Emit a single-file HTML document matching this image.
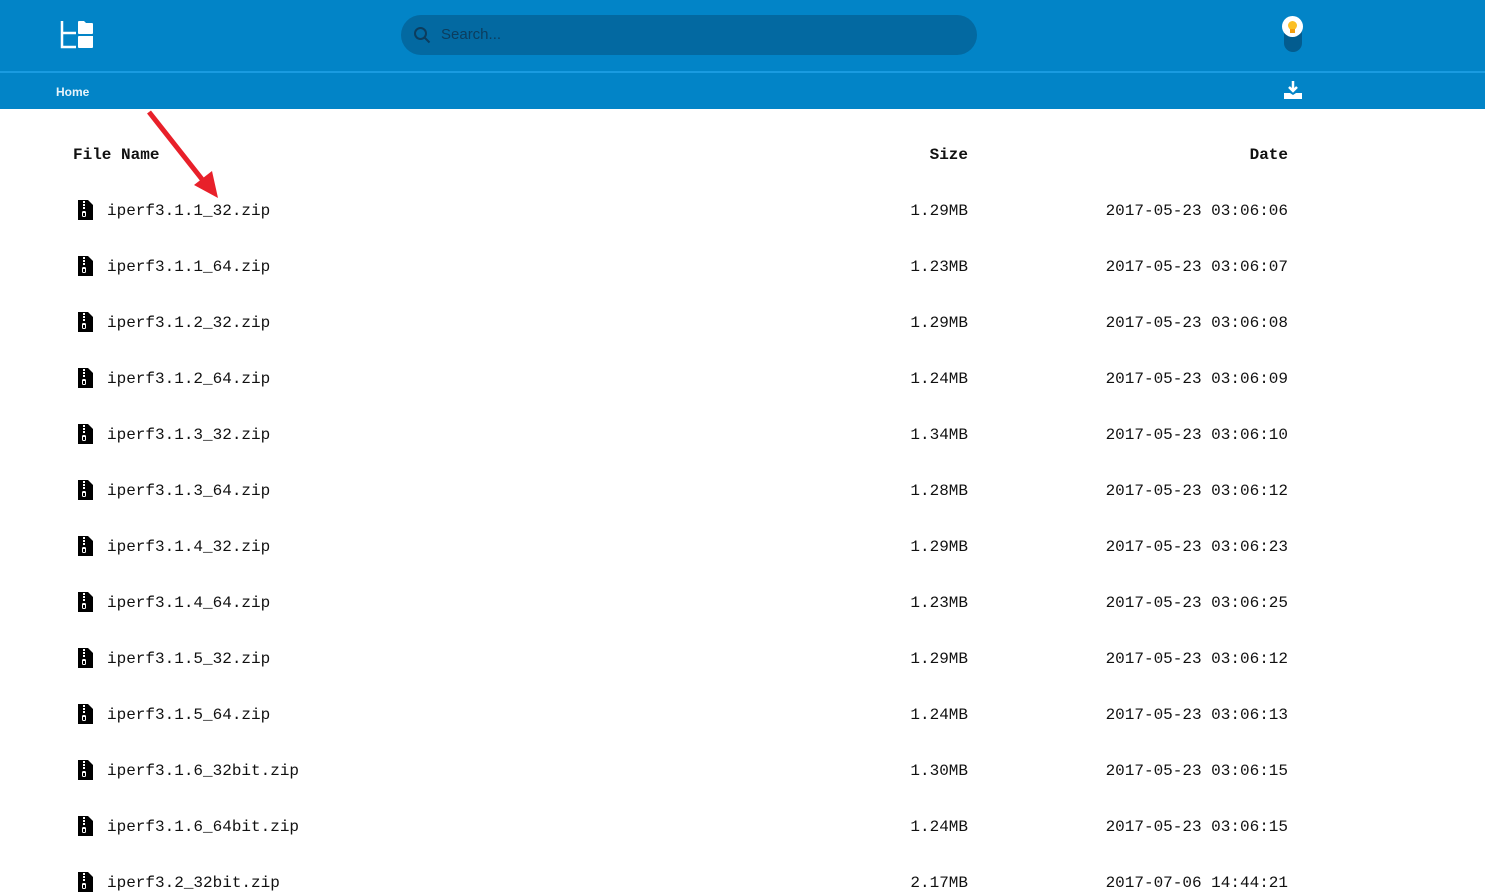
<!DOCTYPE html>
<html><head><style>
body{margin:0;width:1485px;height:889px;overflow:hidden;background:#fff;font-family:"Liberation Mono",monospace;position:relative}
.top{position:absolute;left:0;top:0;width:1485px;height:72px;background:#0284c7}
.line{position:absolute;left:0;top:71px;width:1485px;height:2px;background:#1a9be0}
.bc{position:absolute;left:0;top:73px;width:1485px;height:36px;background:#0284c7}
.search{position:absolute;left:401px;top:15px;width:576px;height:40px;border-radius:20px;background:#0369a1}
.search span{position:absolute;left:40px;top:11px;font:15px "Liberation Sans",sans-serif;color:#0c3d5e}
.home{position:absolute;left:56px;top:85px;font:bold 12px "Liberation Sans",sans-serif;color:#e8f4fb}
.row{position:absolute;left:0;height:20px;font-size:16px;color:#111;width:1485px}
.n{position:absolute;left:107px;top:2px}.s{position:absolute;right:517px;top:2px}.d{position:absolute;right:197px;top:2px}
.ic{position:absolute;left:78px;top:0px}
.hd{font-weight:bold}
</style></head><body>
<div class="top"></div><div class="line"></div><div class="bc"></div>
<svg style="position:absolute;left:60px;top:20px" width="34" height="30" viewBox="0 0 34 30"><path d="M2 1v26h14" stroke="#fff" stroke-width="2.5" fill="none"/><path d="M2 13h14" stroke="#fff" stroke-width="2.5"/><path d="M18 2q0-1 1-1h5l2 2h6q1 0 1 1v9q0 1-1 1H19q-1 0-1-1z M18 17q0-1 1-1h14v11q0 1-1 1H19q-1 0-1-1z" fill="#fff"/></svg>
<div class="search"><svg style="position:absolute;left:12px;top:11px" width="18" height="18" viewBox="0 0 18 18"><circle cx="7.5" cy="7.5" r="5.5" stroke="#0c3d5e" stroke-width="2" fill="none"/><path d="M11.5 11.5l5 5" stroke="#0c3d5e" stroke-width="2"/></svg><span>Search...</span></div>
<div style="position:absolute;left:1284px;top:24px;width:18px;height:28px;border-radius:9px;background:#035c8f"></div>
<div style="position:absolute;left:1282px;top:16px;width:21px;height:21px;border-radius:50%;background:#fff"></div>
<div style="position:absolute;left:1288px;top:21px;width:9px;height:9px;border-radius:50%;background:#fbbf24"></div>
<div style="position:absolute;left:1290px;top:29px;width:5px;height:4px;background:#f59e0b"></div>
<svg style="position:absolute;left:1283px;top:80px" width="20" height="20" viewBox="0 0 20 20"><path d="M10 1v10M6 7l4 4 4-4" stroke="#fff" stroke-width="2.5" fill="none"/><path d="M1 13h6l3 2 3-2h6v6H1z" fill="#fff"/></svg>
<div class="home">Home</div>
<div class="row hd" style="top:144px"><span class="n" style="left:73px">File Name</span><span class="s">Size</span><span class="d">Date</span></div>
<div id="rows"></div>
<svg style="position:absolute;left:0;top:0" width="300" height="220"><path d="M149 112L205 183" stroke="#e8202a" stroke-width="5"/><path d="M194 185L218 198L212 171z" fill="#e8202a"/></svg>
<script>
var d=[["iperf3.1.1_32.zip","1.29MB","2017-05-23 03:06:06"],["iperf3.1.1_64.zip","1.23MB","2017-05-23 03:06:07"],["iperf3.1.2_32.zip","1.29MB","2017-05-23 03:06:08"],["iperf3.1.2_64.zip","1.24MB","2017-05-23 03:06:09"],["iperf3.1.3_32.zip","1.34MB","2017-05-23 03:06:10"],["iperf3.1.3_64.zip","1.28MB","2017-05-23 03:06:12"],["iperf3.1.4_32.zip","1.29MB","2017-05-23 03:06:23"],["iperf3.1.4_64.zip","1.23MB","2017-05-23 03:06:25"],["iperf3.1.5_32.zip","1.29MB","2017-05-23 03:06:12"],["iperf3.1.5_64.zip","1.24MB","2017-05-23 03:06:13"],["iperf3.1.6_32bit.zip","1.30MB","2017-05-23 03:06:15"],["iperf3.1.6_64bit.zip","1.24MB","2017-05-23 03:06:15"],["iperf3.2_32bit.zip","2.17MB","2017-07-06 14:44:21"]];
var h="";d.forEach(function(r,i){h+='<div class="row" style="top:'+(200+i*56)+'px"><svg class="ic" width="15" height="20" viewBox="0 0 15 20"><path d="M0 0h10l5 5v15H0z" fill="#000"/><path d="M5 1h2v2H5zM5 4h2v2H5zM5 7h2v2H5z" fill="#fff"/><rect x="4" y="11" width="4" height="6" rx="1.5" fill="#fff"/><rect x="5" y="13" width="2" height="3" fill="#000"/></svg><span class="n">'+r[0]+'</span><span class="s">'+r[1]+'</span><span class="d">'+r[2]+'</span></div>'});
document.getElementById("rows").innerHTML=h;
</script>
</body></html>
